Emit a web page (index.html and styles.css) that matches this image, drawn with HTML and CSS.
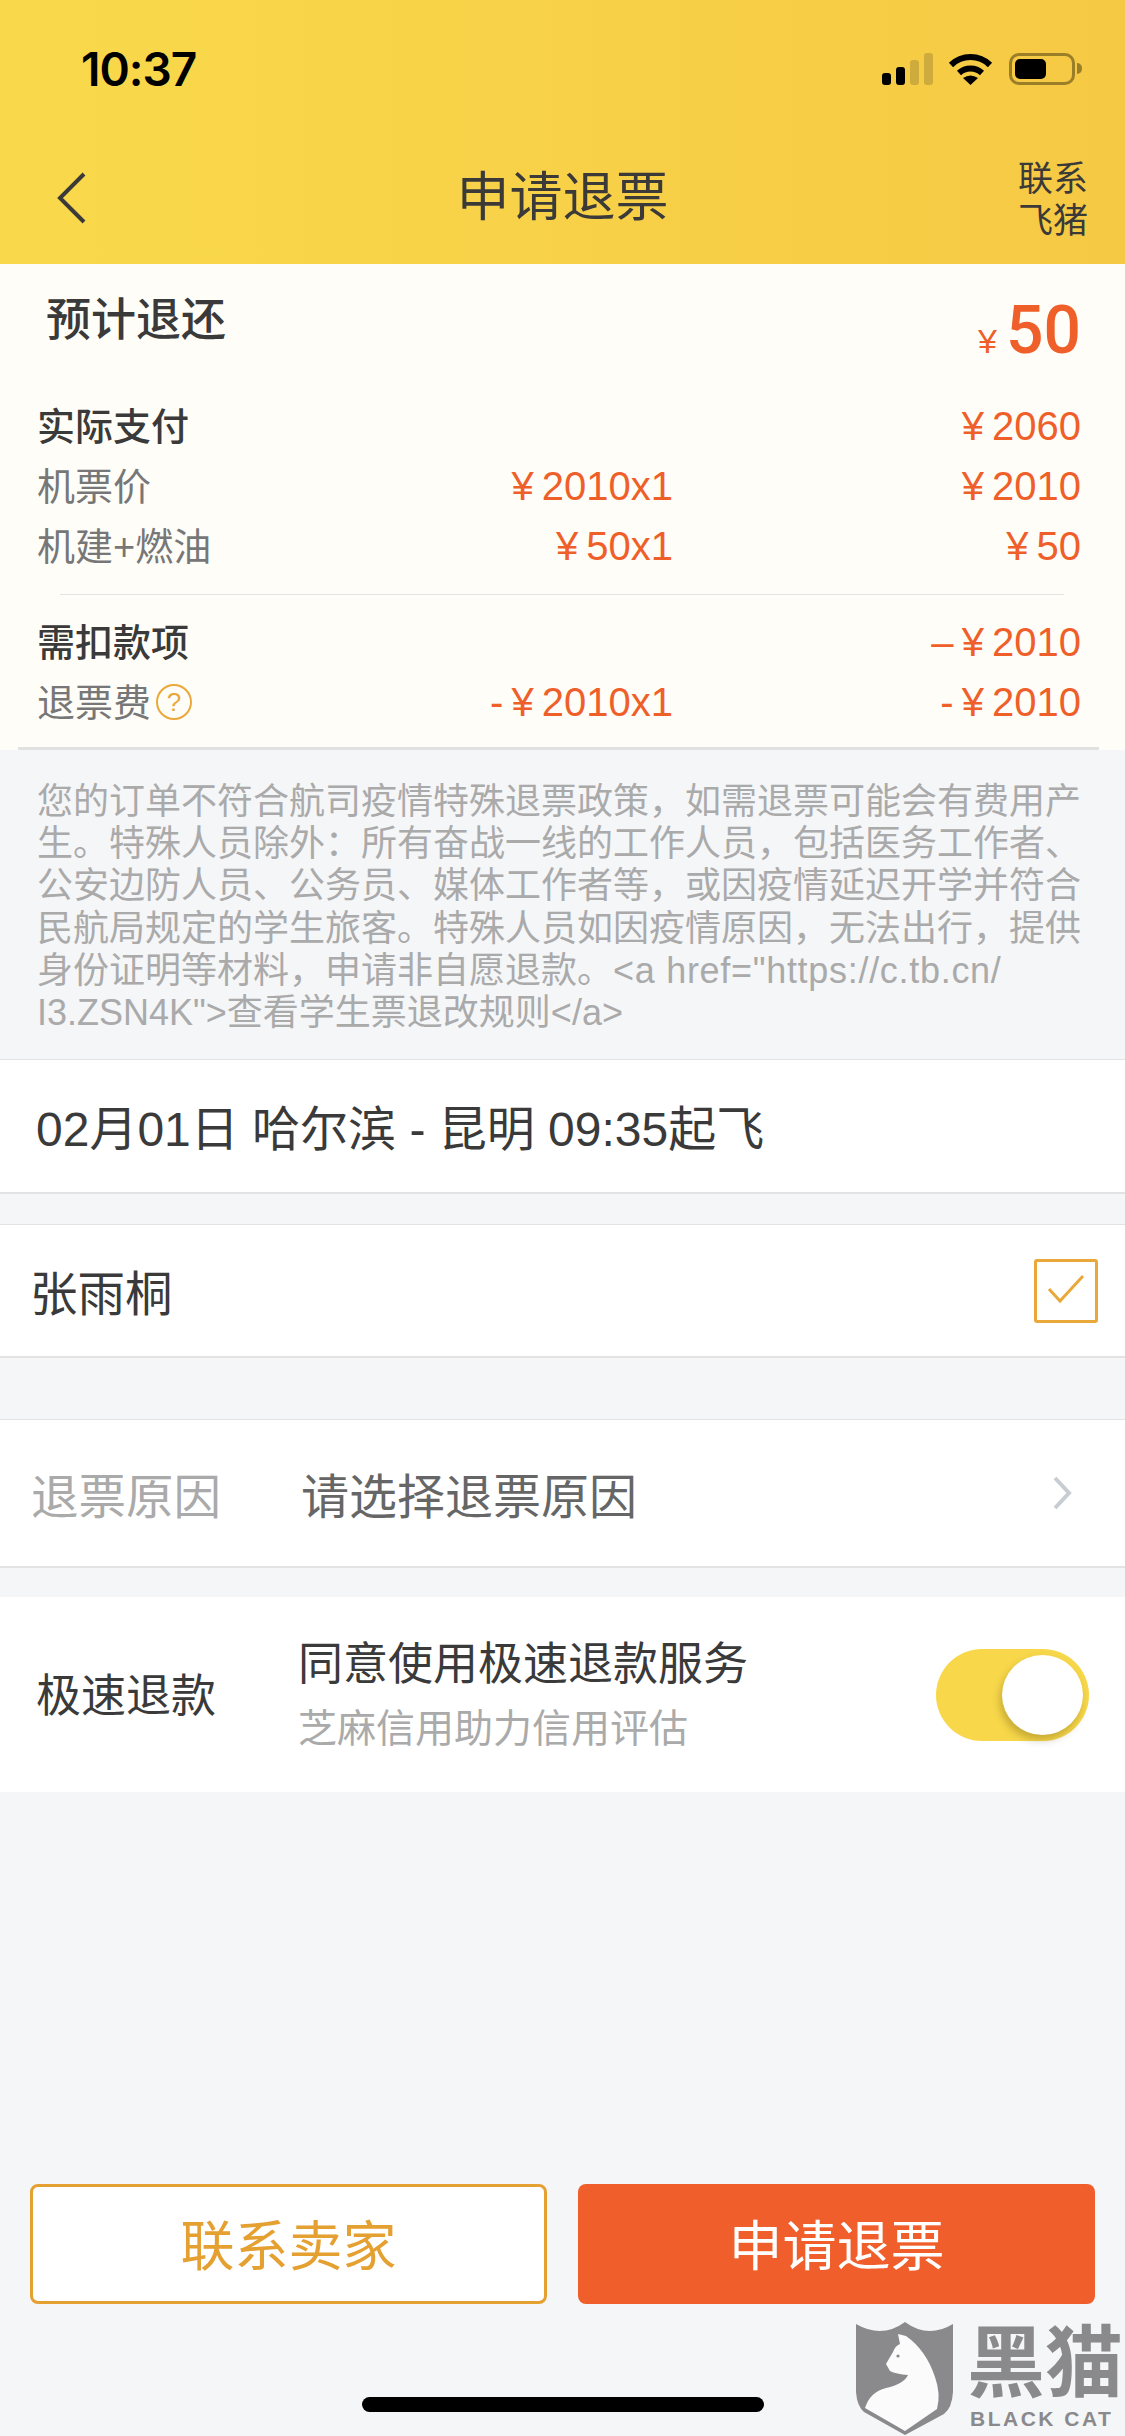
FILE: index.html
```html
<!DOCTYPE html>
<html lang="zh-CN">
<head>
    <meta charset="UTF-8">
    <meta name="viewport" content="width=device-width, initial-scale=1.0">
    <title>申请退票</title>
    <link rel="stylesheet" href="styles.css">
</head>
<body>
    <div class="page">
        <header class="header">
            <div class="status-bar">
                <span class="time">10:37</span>
                <div class="status-icons">
                    <div class="signal">
                        <i class="bar bar-1"></i>
                        <i class="bar bar-2"></i>
                        <i class="bar bar-3"></i>
                        <i class="bar bar-4"></i>
                    </div>
                    <svg class="wifi" width="45" height="32" viewBox="0 0 45 32">
                        <path d="M3 12A28 28 0 0 1 42 12" fill="none" stroke="#000" stroke-width="6"/>
                        <path d="M11 20A17 17 0 0 1 34 20" fill="none" stroke="#000" stroke-width="6"/>
                        <path d="M22.5 32L15 25Q22.5 20 30 25Z" fill="#000"/>
                    </svg>
                    <div class="battery"><i class="battery-fill"></i></div>
                    <i class="battery-cap"></i>
                </div>
            </div>
            <div class="nav">
                <svg class="back" width="29" height="52" viewBox="0 0 29 52">
                    <path d="M27 2L3 26L27 50" fill="none" stroke="#3b3a38" stroke-width="4"/>
                </svg>
                <h1 class="nav-title">申请退票</h1>
                <div class="nav-link">联系<br>飞猪</div>
            </div>
        </header>

        <section class="summary">
            <div class="summary-head">
                <h2 class="summary-title">预计退还</h2>
                <div class="refund"><span class="refund-unit">¥</span><span class="refund-num">50</span></div>
            </div>
            <div class="fee-row fee-main">
                <span class="fee-label">实际支付</span>
                <span class="fee-price"></span>
                <span class="fee-total">¥ 2060</span>
            </div>
            <div class="fee-row">
                <span class="fee-label">机票价</span>
                <span class="fee-price">¥ 2010x1</span>
                <span class="fee-total">¥ 2010</span>
            </div>
            <div class="fee-row">
                <span class="fee-label">机建+燃油</span>
                <span class="fee-price">¥ 50x1</span>
                <span class="fee-total">¥ 50</span>
            </div>
            <div class="fee-divider"></div>
            <div class="fee-row fee-main">
                <span class="fee-label">需扣款项</span>
                <span class="fee-price"></span>
                <span class="fee-total">– ¥ 2010</span>
            </div>
            <div class="fee-row">
                <span class="fee-label">退票费<span class="help">?</span></span>
                <span class="fee-price">- ¥ 2010x1</span>
                <span class="fee-total">- ¥ 2010</span>
            </div>
            <div class="summary-line"></div>
        </section>

        <p class="notice">您的订单不符合航司疫情特殊退票政策&#xFF0C;如需退票可能会有费用产<br>生。特殊人员除外&#xFF1A;所有奋战一线的工作人员&#xFF0C;包括医务工作者、<br>公安边防人员、公务员、媒体工作者等&#xFF0C;或因疫情延迟开学并符合<br>民航局规定的学生旅客。特殊人员如因疫情原因&#xFF0C;无法出行&#xFF0C;提供<br>身份证明等材料&#xFF0C;申请非自愿退款。<span class="notice-tag">&lt;a href="https://c.tb.cn/</span><br>I3.ZSN4K"&gt;查看学生票退改规则&lt;/a&gt;</p>

        <div class="block flight">02月01日 哈尔滨 - 昆明 09:35起飞</div>

        <div class="block passenger">
            <span>张雨桐</span>
            <div class="checkbox">
                <svg width="58" height="58" viewBox="0 0 58 58">
                    <path d="M12 27L23 39L46 14" fill="none" stroke="#eba83a" stroke-width="3"/>
                </svg>
            </div>
        </div>

        <div class="block reason">
            <span class="reason-label">退票原因</span>
            <span class="reason-value">请选择退票原因</span>
            <svg class="chevron" width="20" height="34" viewBox="0 0 20 34">
                <path d="M3 2L17 17L3 32" fill="none" stroke="#c8ccd3" stroke-width="4"/>
            </svg>
        </div>

        <div class="speed">
            <span class="speed-label">极速退款</span>
            <div class="speed-text">
                <div class="speed-title">同意使用极速退款服务</div>
                <div class="speed-sub">芝麻信用助力信用评估</div>
            </div>
            <div class="toggle"><i class="knob"></i></div>
        </div>

        <div class="actions">
            <button class="btn btn-outline">联系卖家</button>
            <button class="btn btn-solid">申请退票</button>
        </div>
        <div class="home-bar"></div>

        <div class="watermark">
            <svg class="shield" width="97" height="113" viewBox="0 0 97 113">
                <path d="M0 2Q26 17 49 0Q72 17 97 2V70Q96 86 88 92L49 113L8 90Q1 84 0 70Z" fill="#8a898c"/>
                <path d="M42 12L50 14Q70 28 79 55Q85 72 81 87L49 109L9 86Q14 70 30 66Q48 62 52 53Q40 52 34 49L30 42Q34 35 37 30Q39 24 44 22Z" fill="#fbfbfb"/>
                <circle cx="42" cy="34" r="1.6" fill="#8a898c"/>
            </svg>
            <div class="brand">
                <div class="brand-cn">黑猫</div>
                <div class="brand-en">BLACK CAT</div>
            </div>
        </div>
    </div>
</body>
</html>
```

FILE: styles.css
```css
* {
    margin: 0;
    padding: 0;
    box-sizing: border-box;
    font-family: "Liberation Sans", "Noto Sans CJK SC", sans-serif;
}
body {
    background: #f5f6f8;
}
.page {
    position: relative;
    display: flex;
    flex-direction: column;
    width: 1125px;
    height: 2436px;
    overflow: hidden;
    background: #f5f6f8;
}

/* header */
.header {
    height: 264px;
    background: linear-gradient(90deg, #f9d94b, #f6c944);
}
.status-bar {
    display: flex;
    justify-content: space-between;
    align-items: flex-start;
    height: 150px;
    padding: 45px 43px 0 81px;
}
.time {
    font-family: Inter, sans-serif;
    font-size: 46px;
    font-weight: 600;
    line-height: 48px;
    letter-spacing: -1px;
    color: #000;
}
.status-icons {
    display: flex;
    align-items: flex-start;
    padding-top: 8px;
}
.signal {
    display: flex;
    align-items: flex-end;
    gap: 5px;
    height: 32px;
}
.bar {
    display: block;
    width: 9px;
    border-radius: 3px;
    background: #000;
}
.bar-1 { height: 12px; }
.bar-2 { height: 18px; }
.bar-3 { height: 25px; background: #cdab3c; }
.bar-4 { height: 32px; background: #cdab3c; }
.wifi {
    margin-left: 15px;
}
.battery {
    width: 66px;
    height: 32px;
    margin-left: 16px;
    padding: 3px;
    border: 3px solid #9a7f28;
    border-radius: 10px;
}
.battery-fill {
    display: block;
    width: 31px;
    height: 100%;
    border-radius: 5px;
    background: #000;
}
.battery-cap {
    display: block;
    width: 5px;
    height: 11px;
    margin: 10px 0 0 2px;
    border-radius: 0 5px 5px 0;
    background: #9a7f28;
}
.nav {
    position: relative;
    display: flex;
    justify-content: space-between;
    align-items: flex-start;
    padding: 22px 37px 0 57px;
}
.nav-title {
    position: absolute;
    left: 0;
    right: 0;
    top: 15px;
    text-align: center;
    font-size: 53px;
    font-weight: 400;
    line-height: 66px;
    color: #3b3a38;
}
.nav-link {
    margin-top: -14px;
    font-size: 35px;
    line-height: 42px;
    color: #3b3a38;
}

/* summary */
.summary {
    padding: 0 44px 0 37px;
    background: #fffdf7;
}
.summary-head {
    display: flex;
    justify-content: space-between;
    height: 132px;
    padding-left: 9px;
}
.summary-title {
    margin-top: 25px;
    font-size: 45px;
    font-weight: 500;
    line-height: 64px;
    color: #3a3a3a;
}
.refund {
    margin-top: 33px;
    color: #ef5f2a;
    line-height: 68px;
}
.refund-unit {
    margin-right: 9px;
    font-size: 34px;
}
.refund-num {
    font-family: Roboto, sans-serif;
    font-size: 66px;
    font-weight: 500;
}
.fee-row {
    display: grid;
    grid-template-columns: 300px 336px 1fr;
    align-items: center;
    height: 60px;
    font-size: 40px;
    word-spacing: -3px;
    color: #ef5f2a;
}
.fee-label {
    display: flex;
    align-items: center;
    margin-top: -5px;
    font-size: 38px;
    color: #777;
}
.fee-main .fee-label {
    font-weight: 500;
    color: #3a3a3a;
}
.fee-price,
.fee-total {
    text-align: right;
}
.help {
    display: flex;
    align-items: center;
    justify-content: center;
    width: 36px;
    height: 36px;
    margin: 5px 0 0 5px;
    border: 2px solid #eba83a;
    border-radius: 50%;
    font-size: 26px;
    color: #eba83a;
}
.fee-divider {
    height: 1px;
    margin: 18px 17px 17px 23px;
    background: #e4e4e4;
}
.summary-line {
    height: 3px;
    margin: 15px -18px 0 -19px;
    background: #e1e1e1;
}

/* notice */
.notice {
    height: 309px;
    padding: 31px 0 0 37px;
    font-size: 36px;
    line-height: 42.2px;
    white-space: nowrap;
    color: #aaa;
}
.notice-tag {
    letter-spacing: 0.7px;
}

/* white blocks */
.block {
    display: flex;
    align-items: center;
    background: #fff;
    border-top: 1px solid #e3e3e3;
    border-bottom: 2px solid #e3e3e3;
    font-size: 47.5px;
    color: #3a3a3a;
}
.flight {
    height: 135px;
    padding: 0 0 3px 36px;
    font-size: 48px;
}
.passenger {
    justify-content: space-between;
    height: 134px;
    margin-top: 30px;
    padding: 0 27px 0 30px;
}
.checkbox {
    width: 64px;
    height: 64px;
    border: 3px solid #eba83a;
    border-radius: 3px;
}
.checkbox svg {
    display: block;
}
.reason {
    height: 149px;
    margin-top: 61px;
    padding: 0 53px 0 31px;
}
.reason-label {
    width: 270px;
    color: #aaa;
}
.reason-value {
    flex: 1;
    font-size: 48px;
    color: #666;
}

/* quick refund */
.speed {
    display: flex;
    align-items: center;
    height: 195px;
    margin-top: 29px;
    padding: 0 36px 0 36px;
    background: #fff;
}
.speed-label {
    width: 262px;
    margin-top: -4px;
    font-size: 45px;
    color: #3a3a3a;
}
.speed-text {
    flex: 1;
}
.speed-title {
    font-size: 45px;
    line-height: 60px;
    color: #3a3a3a;
}
.speed-sub {
    margin-top: 8px;
    font-size: 39px;
    line-height: 52px;
    color: #aaa;
}
.toggle {
    display: flex;
    justify-content: flex-end;
    align-items: center;
    width: 153px;
    height: 92px;
    padding-right: 6px;
    border-radius: 46px;
    background: #f8d84a;
}
.knob {
    display: block;
    width: 81px;
    height: 80px;
    border-radius: 50%;
    background: #fff;
    box-shadow: -2px 5px 9px rgba(80, 60, 0, 0.3);
}

/* footer */
.actions {
    display: grid;
    grid-template-columns: 517px 517px;
    gap: 31px;
    margin-top: auto;
    padding: 0 30px;
}
.btn {
    height: 120px;
    padding-bottom: 4px;
    border-radius: 8px;
    font-size: 54px;
    cursor: pointer;
}
.btn-outline {
    border: 3px solid #e5a032;
    background: #fff;
    color: #e5a032;
}
.btn-solid {
    border: none;
    background: #f05f2b;
    color: #fff;
}
.home-bar {
    width: 402px;
    height: 15px;
    margin: 93px 0 24px 362px;
    border-radius: 8px;
    background: #000;
}

/* watermark */
.watermark {
    position: absolute;
    left: 856px;
    top: 2322px;
    display: flex;
    gap: 14px;
    color: #8a898c;
}
.shield {
    display: block;
    flex-shrink: 0;
}
.brand-cn {
    margin-top: 3px;
    font-size: 78px;
    font-weight: 700;
    line-height: 78px;
    white-space: nowrap;
}
.brand-en {
    margin: 6px 0 0 3px;
    font-size: 21px;
    font-weight: 700;
    line-height: 20px;
    letter-spacing: 2.5px;
    white-space: nowrap;
}
```
